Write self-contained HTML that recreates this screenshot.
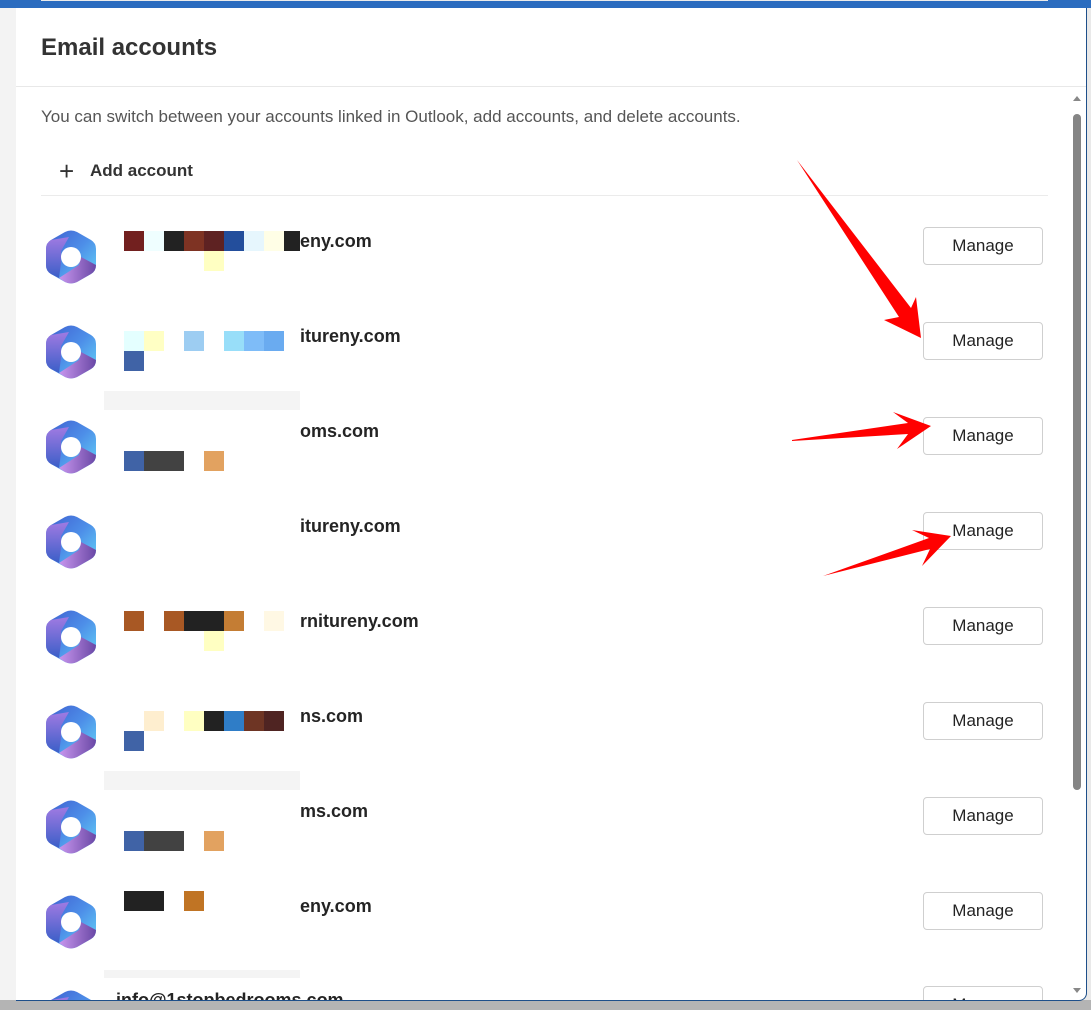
<!DOCTYPE html>
<html><head><meta charset="utf-8"><style>
*{margin:0;padding:0;box-sizing:border-box}
html,body{width:1091px;height:1010px;overflow:hidden}
body{background:#b4b4b4;font-family:"Liberation Sans",sans-serif;position:relative;color:#242424}
.abs{position:absolute}
.sep{position:absolute;left:41px;width:1007px;height:1px;background:#ebebeb}
.btn{position:absolute;left:923px;width:120px;height:38px;border:1px solid #cfcfcf;border-radius:4px;background:#fff;font-size:17px;text-align:center;line-height:36px;color:#242424}
.dom{position:absolute;left:300px;font-size:18px;font-weight:bold;color:#242424;line-height:20px}
.px{position:absolute;width:20px;height:20px}
.ic{position:absolute;left:45px;width:52px;height:56px}
#clip{position:absolute;left:16px;top:0;width:1070px;height:1000px;overflow:hidden}
#clip>*{margin-left:-16px}
</style></head><body>
<div class="abs" style="left:0;top:0;width:1091px;height:1000px;background:#e9e9e9"></div>
<div class="abs" style="left:0;top:0;width:16px;height:1000px;background:#f3f3f3"></div>
<div class="abs" style="left:16px;top:0;width:1071px;height:1001px;background:#fff;border-right:1px solid #1e4f8a;border-bottom:1px solid #1e4f8a;border-bottom-right-radius:8px"></div>
<div class="abs" style="left:0;top:0;width:1091px;height:8px;background:#2b6cbf"></div>
<div class="abs" style="left:41px;top:34px;font-size:24px;font-weight:bold;color:#333">Email accounts</div>
<div class="abs" style="left:16px;top:86px;width:1070px;height:1px;background:#e8e8e8"></div>
<div class="abs" style="left:41px;top:107px;font-size:17px;color:#555">You can switch between your accounts linked in Outlook, add accounts, and delete accounts.</div>
<div class="abs" style="left:59px;top:161px;font-size:26px;line-height:20px;font-weight:300;color:#333">+</div>
<div class="abs" style="left:90px;top:161px;font-size:17px;font-weight:bold;color:#333">Add account</div>
<div class="sep" style="top:195px"></div>
<div class="abs" style="left:1073px;top:96px;width:0;height:0;border-left:4px solid transparent;border-right:4px solid transparent;border-bottom:5px solid #888"></div>
<div class="abs" style="left:1073px;top:114px;width:8px;height:676px;background:#858585;border-radius:4px"></div>
<div class="abs" style="left:1073px;top:988px;width:0;height:0;border-left:4px solid transparent;border-right:4px solid transparent;border-top:5px solid #888"></div>

<svg width="0" height="0" style="position:absolute"><defs>
<linearGradient id="g1" x1="0" y1="0" x2="1" y2="1"><stop offset="0" stop-color="#3f5fd0"/><stop offset="0.5" stop-color="#4d8ee8"/><stop offset="1" stop-color="#65d8f8"/></linearGradient>
<linearGradient id="g2" x1="0" y1="0" x2="0" y2="1"><stop offset="0" stop-color="#a07ae2"/><stop offset="1" stop-color="#3a5fc8"/></linearGradient>
<linearGradient id="g3" x1="0" y1="0" x2="1" y2="0"><stop offset="0" stop-color="#c896ee"/><stop offset="1" stop-color="#6a48a6"/></linearGradient>
</defs></svg>

<div id="clip"><div id="rows" style="position:absolute;left:0;top:0"></div></div>

<div class="abs" style="left:104px;top:196px;width:196px;height:782px;background:#fff"></div>
<div class="abs" style="left:104px;top:391px;width:196px;height:19px;background:#f4f4f4"></div>
<div class="abs" style="left:104px;top:771px;width:196px;height:19px;background:#f4f4f4"></div>
<div class="abs" style="left:104px;top:970px;width:196px;height:8px;background:#f4f4f4"></div>
<div id="pix"></div>

<svg class="abs" style="left:0;top:0" width="1091" height="1010">
<polygon fill="#ff0000" points="797,160 911,308 916,297 921,338 884,320 899,317"/>
<polygon fill="#ff0000" points="792,440 908,423 893,412 931,426 897,449 908,434 792,441"/>
<polygon fill="#ff0000" points="823,576 929,538 912,530 951,536 922,566 930,549"/>
</svg>
<script>
var doms=["eny.com","itureny.com","oms.com","itureny.com","rnitureny.com","ns.com","ms.com","eny.com","info@1stopbedrooms.com"];
var h="";
for(var i=0;i<9;i++){
 var c=246+95*i;
 var top=i==0?195:305+95*(i-1);
 if(i>0) h+='<div class="sep" style="top:'+(top)+'px"></div>';
 h+='<svg class="ic" style="top:'+(c-17)+'px" viewBox="0 0 52 56"><path d="M20 3 Q26 0 32 3 L46 11 Q51 14 51 20 L51 36 Q51 42 46 45 L32 53 Q26 56 20 53 L6 45 Q1 42 1 36 L1 20 Q1 14 6 11 Z" fill="url(#g1)"/><path d="M6 11 Q1 14 1 20 L1 36 Q1 42 6 45 L14 49 L16 34 L16 22 L24 8 Z" fill="url(#g2)"/><path d="M14 49 L20 53 Q26 56 32 53 L46 45 Q51 42 51 36 L36 28 L34 36 Z" fill="url(#g3)"/><circle cx="26" cy="28" r="10" fill="#fff"/></svg>';
 var dt=i==8?990:c-15;
 h+='<div class="dom" style="top:'+dt+'px;'+(i==8?'left:116px':'')+'">'+doms[i]+'</div>';
 h+='<div class="btn" style="top:'+(i==8?986:c-19)+'px">Manage</div>';
}
document.getElementById('rows').innerHTML=h;
var P=[
[231,["#72201f","#effeff","#222","#7e3323","#5e2222","#234e9c","#e6f6fd","#fffee6","#222"]],[251,[0,0,0,0,"#ffffc2"]],
[331,["#e4ffff","#ffffc4",0,"#9dcdf2",0,"#98def9","#7ebcf8","#6aabf0"]],[351,["#4063a6"]],
[451,["#4063a6","#424242","#424242",0,"#e2a260"]],
[611,["#a85824",0,"#a85824","#222","#222","#c47d34",0,"#fff8e4"]],[631,[0,0,0,0,"#ffffc2"]],
[711,[0,"#feeecf",0,"#ffffc2","#222","#2f7dc7","#6e3524","#4f2422"]],[731,["#4063a6"]],
[831,["#4063a6","#424242","#424242",0,"#e2a260"]],
[891,["#222","#222",0,"#c07424"]]];
var s="";
P.forEach(function(r){r[1].forEach(function(col,k){if(col){var x=124+20*k;var w=Math.min(20,300-x);s+='<div class="px" style="top:'+r[0]+'px;left:'+x+'px;width:'+w+'px;background:'+col+'"></div>';}});});
document.getElementById('pix').innerHTML=s;
</script>
</body></html>
